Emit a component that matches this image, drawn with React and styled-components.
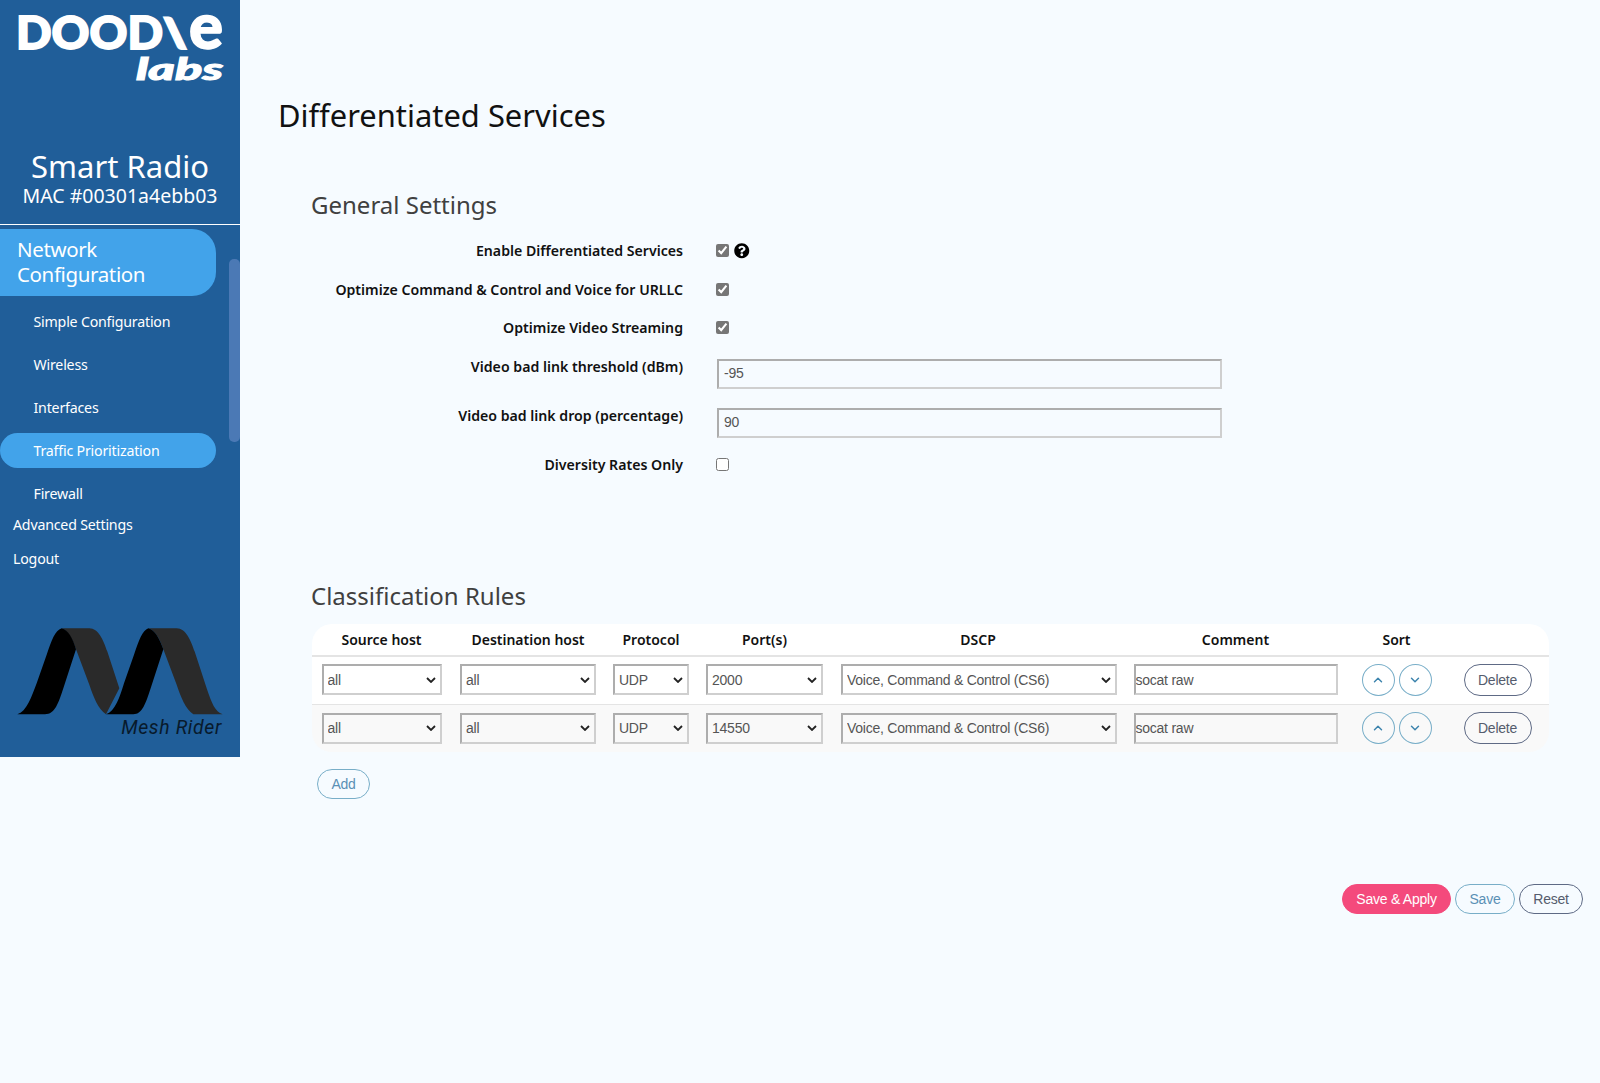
import React from 'react';
import styled, { createGlobalStyle } from 'styled-components';
import { FaQuestionCircle } from 'react-icons/fa';
import { LuChevronUp, LuChevronDown } from 'react-icons/lu';

const Global = createGlobalStyle`
  html, body { margin: 0; padding: 0; background: #f6fbff; }
  body { font-family: "Noto Sans", "Open Sans", sans-serif; }
  * { box-sizing: border-box; }
`;
const chevron = `url("data:image/svg+xml,%3Csvg xmlns='http://www.w3.org/2000/svg' width='10' height='6' viewBox='0 0 10 6'%3E%3Cpath d='M1 1l4 4 4-4' fill='none' stroke='%23222' stroke-width='1.8'/%3E%3C/svg%3E")`;
const Page = styled.div`display: flex; align-items: flex-start; min-height: 1083px; width: 1600px; overflow: hidden;`;
const Sidebar = styled.aside`
  position: relative; width: 240px; height: 757px; flex: none; background: #205e99; color: #fff; overflow: hidden;
`;
const Brand = styled.div`height: 149px; padding: 10px 0 0 14px;`;
const LogoSvg = styled.svg`display: block; overflow: visible;`;
const DeviceName = styled.div`text-align: center; font-size: 31px; line-height: 34px; height: 34px;`;
const DeviceMac = styled.div`text-align: center; font-size: 19.5px; line-height: 26px; height: 26px;`;
const Divider = styled.div`height: 1px; background: #fff; margin: 15px 0 4px;`;
const GroupPill = styled.div`
  width: 216px; height: 67px; background: #42a3ea; border-radius: 0 24px 24px 0;
  padding: 8px 0 0 17px; font-size: 20.5px; letter-spacing: -0.37px; line-height: 25px;
`;
const SubList = styled.div`display: flex; flex-direction: column; padding-top: 5px;`;
const SubItem = styled.div`
  height: 35px; margin-top: ${p => (p.$first ? 3 : 8)}px; width: 216px; padding-left: 33.5px; font-size: 14.2px; letter-spacing: -0.2px; line-height: 35px;
  border-radius: 18px; background: ${p => (p.$active ? '#42a3ea' : 'transparent')};
`;
const TopItem = styled.div`padding-left: 13px; font-size: 14.2px; letter-spacing: -0.2px; line-height: 20px; height: 20px; margin-top: ${p => p.$gap}px;`;
const MeshLogo = styled.div`margin-top: 59px; position: relative; height: 130px;`;
const MeshText = styled.span`
  position: absolute; right: 18px; top: 88px; font-family: Roboto, sans-serif; font-style: italic; font-size: 19.4px;
  letter-spacing: 0.65px; color: #081a2c;
`;
const ScrollThumb = styled.div`position: absolute; top: 259px; right: 0; width: 11px; height: 183px; background: #4b79b5; border-radius: 5px;`;
const Main = styled.main`flex: 1; padding: 93px 17px 0 38px;`;
const Title = styled.h1`margin: 0; font-weight: 400; font-size: 30.9px; line-height: 44px; color: #111;`;
const Section = styled.section`padding-left: 33px;`;
const SectionTitle = styled.h2`margin: 0; font-weight: 400; font-size: 24px; line-height: 34px; color: #404040; margin-top: ${p => p.$top}px;`;
const Form = styled.div`margin-top: 10px;`;
const Row = styled.div`display: grid; grid-template-columns: 372px 1fr; column-gap: 33px; height: ${p => p.$h}px; align-items: ${p => (p.$top ? 'start' : 'center')}; padding-top: ${p => (p.$top ? 9 : 0)}px;`;
const Label = styled.label`text-align: right; font-weight: 600; font-size: 14.15px; line-height: 20px; color: #111;`;
const CheckWrap = styled.div`display: flex; align-items: center; gap: 5px; margin-bottom: 1px;`;
const Check = styled.input.attrs({ type: 'checkbox' })`width: 13px; height: 13px; margin: 0; accent-color: #767676;`;
const Help = styled(FaQuestionCircle)`width: 15.5px; height: 15.5px; color: #000;`;
const insetBorder = `
  border-style: solid; border-width: 2px;
  border-color: #adadad #cfcfcf #cfcfcf #adadad;
`;
const controlFont = `
  font-family: "Liberation Sans", Arial, sans-serif; font-size: 14px; letter-spacing: -0.24px; color: #555;
`;
const TextBox = styled.input`
  ${insetBorder}
  ${controlFont}
  display: block; width: 505px; height: 30px; padding: 0 5px 1px; background: #f6fbff; outline: none;
  margin: 2px 0 0 1px;
`;
const Table = styled.table`
  width: 1237px; table-layout: fixed; border-collapse: separate; border-spacing: 0; margin: 11px 0 0 1px;
`;
const HeadCell = styled.th`
  background: #fff; height: 33px; font-weight: 600; font-size: 14px; color: #111; text-align: center; padding: 0; border-bottom: 2px solid #e4e4e4;
  &:first-child { border-top-left-radius: 20px; }
  &:last-child { border-top-right-radius: 20px; }
`;
const Cell = styled.td`
  padding: 0 0 ${p => (p.$alt ? 1 : 2)}px; text-align: center; height: ${p => (p.$alt ? 47 : 48)}px; background: ${p => (p.$alt ? '#f9f9f9' : '#fff')};
  border-bottom: ${p => (p.$alt ? 'none' : '1px solid #e4e4e4')};
  vertical-align: middle;
  &:first-child { border-bottom-left-radius: ${p => (p.$alt ? 20 : 0)}px; }
  &:last-child { border-bottom-right-radius: ${p => (p.$alt ? 20 : 0)}px; }
`;
const Select = styled.select`
  ${insetBorder}
  ${controlFont}
  appearance: none;
  width: ${p => p.$w}px; height: 31px; padding: 0 16px 0 4px; margin-left: ${p => p.$ml || 0}px;
  background: ${p => (p.$alt ? '#f9f9f9' : '#fff')} ${chevron} no-repeat right 4px center; vertical-align: middle;
  border-radius: 0; outline: none;
`;
const CellInput = styled.input`
  ${insetBorder}
  ${controlFont}
  width: 204px; height: 31px; padding: 0; background: ${p => (p.$alt ? '#f9f9f9' : '#fff')}; vertical-align: middle; outline: none;
`;
const SortGroup = styled.div`display: flex; justify-content: center; gap: 4px;`;
const Round = styled.button`
  width: 33px; height: 32px; border-radius: 50%; border: 1px solid #78aec8; background: transparent; color: #3d84ad; padding: 0; display: flex; align-items: center; justify-content: center;
`;
const Pill = styled.button`
  height: ${p => p.$h || 30}px; padding: 0; width: ${p => p.$w}px; border-radius: 16px; font-family: "Liberation Sans", Arial, sans-serif; font-size: 14px; letter-spacing: -0.24px;
  border: 1px solid ${p => ({ primary: '#f44a7c', neutral: '#5e6a85', link: '#78aec8' }[p.$kind])};
  background: ${p => (p.$kind === 'primary' ? '#f44a7c' : 'transparent')};
  color: ${p => ({ primary: '#fff', neutral: '#555c6d', link: '#5a90b5' }[p.$kind])};
`;
const AddWrap = styled.div`margin: 17px 0 0 6px;`;
const Actions = styled.div`display: flex; justify-content: flex-end; gap: 4px; margin-top: 85px;`;

const rules = [{ port: '2000' }, { port: '14550', alt: true }];
const LOGO_FONT = { fontFamily: 'Lato, sans-serif', fontWeight: 900, fill: '#fff', stroke: '#fff' };

export default function App() {
  return (
    <Page>
      <Global />
      <Sidebar>
        <Brand>
          <LogoSvg width="212" height="76" viewBox="0 0 212 76">
            <text {...LOGO_FONT} x="2" y="39" textLength="147" lengthAdjust="spacingAndGlyphs" fontSize="46" strokeWidth="1.8">DOOD</text>
            <text {...LOGO_FONT} x="150" y="36" textLength="22" lengthAdjust="spacingAndGlyphs" fontSize="38" strokeWidth="3">\</text>
            <text {...LOGO_FONT} x="175" y="39" textLength="34" lengthAdjust="spacingAndGlyphs" fontSize="64" strokeWidth="1.5">e</text>
            <text {...LOGO_FONT} x="122" y="70" textLength="87" lengthAdjust="spacingAndGlyphs" fontStyle="italic" fontSize="31" strokeWidth="1">labs</text>
          </LogoSvg>
        </Brand>
        <DeviceName>Smart Radio</DeviceName>
        <DeviceMac>MAC #00301a4ebb03</DeviceMac>
        <Divider />
        <GroupPill>Network<br />Configuration</GroupPill>
        <SubList>
          <SubItem $first>Simple Configuration</SubItem>
          <SubItem>Wireless</SubItem>
          <SubItem>Interfaces</SubItem>
          <SubItem $active>Traffic Prioritization</SubItem>
          <SubItem>Firewall</SubItem>
        </SubList>
        <TopItem $gap={4}>Advanced Settings</TopItem>
        <TopItem $gap={14}>Logout</TopItem>
        <MeshLogo>
          <svg width="240" height="87" viewBox="0 85 720 260" style={{ display: 'block' }}>
            <path fill="#2a2a2a" d="M185 85H268C295 85 310 120 322 155L358 265L318 343C295 330 280 290 268 255L228 148C215 110 200 90 185 85Z" />
            <path fill="#000" d="M52 343C80 335 95 290 110 250L140 165C155 120 165 92 185 85C205 90 218 115 228 148L190 265C175 310 165 343 135 343Z" />
            <path fill="#2a2a2a" d="M445 85H530C557 85 572 120 584 155L620 265C635 310 645 335 668 343H580C557 330 542 290 530 255L490 148C477 110 462 90 445 85Z" />
            <path fill="#000" d="M318 343C345 335 360 290 372 250L402 165C417 120 427 92 445 85C465 90 478 115 490 148L452 265C437 310 427 343 400 343Z" />
          </svg>
          <MeshText>Mesh Rider</MeshText>
        </MeshLogo>
        <ScrollThumb />
      </Sidebar>
      <Main>
        <Title>Differentiated Services</Title>
        <Section>
          <SectionTitle $top={51}>General Settings</SectionTitle>
          <Form>
            <Row $h={38.5}><Label>Enable Differentiated Services</Label><CheckWrap><Check defaultChecked /><Help /></CheckWrap></Row>
            <Row $h={38.5}><Label>Optimize Command &amp; Control and Voice for URLLC</Label><CheckWrap><Check defaultChecked /></CheckWrap></Row>
            <Row $h={38.5}><Label>Optimize Video Streaming</Label><CheckWrap><Check defaultChecked /></CheckWrap></Row>
            <Row $h={49} $top><Label>Video bad link threshold (dBm)</Label><TextBox defaultValue="-95" /></Row>
            <Row $h={49} $top><Label>Video bad link drop (percentage)</Label><TextBox defaultValue="90" /></Row>
            <Row $h={38.5}><Label>Diversity Rates Only</Label><CheckWrap><Check /></CheckWrap></Row>
          </Form>
          <SectionTitle $top={95}>Classification Rules</SectionTitle>
          <Table>
            <colgroup>
              {[139, 154, 92, 135, 292, 223, 99, 103].map((w, i) => <col key={i} width={w} />)}
            </colgroup>
            <thead>
              <tr>
                {['Source host', 'Destination host', 'Protocol', 'Port(s)', 'DSCP', 'Comment', 'Sort', ''].map((h, i) => <HeadCell key={i}>{h}</HeadCell>)}
              </tr>
            </thead>
            <tbody>
              {rules.map(r => (
                <tr key={r.port}>
                  <Cell $alt={r.alt}><Select $alt={r.alt} $w={120}><option>all</option></Select></Cell>
                  <Cell $alt={r.alt}><Select $alt={r.alt} $w={136}><option>all</option></Select></Cell>
                  <Cell $alt={r.alt}><Select $alt={r.alt} $w={76}><option>UDP</option></Select></Cell>
                  <Cell $alt={r.alt}><Select $alt={r.alt} $w={117}><option>{r.port}</option></Select></Cell>
                  <Cell $alt={r.alt}><Select $alt={r.alt} $w={276} $ml={2}><option>Voice, Command &amp; Control (CS6)</option></Select></Cell>
                  <Cell $alt={r.alt}><CellInput $alt={r.alt} defaultValue="socat raw" /></Cell>
                  <Cell $alt={r.alt}>
                    <SortGroup>
                      <Round><LuChevronUp size={14} strokeWidth={2.5} /></Round>
                      <Round><LuChevronDown size={14} strokeWidth={2.5} /></Round>
                    </SortGroup>
                  </Cell>
                  <Cell $alt={r.alt}><Pill $kind="neutral" $w={68} $h={32}>Delete</Pill></Cell>
                </tr>
              ))}
            </tbody>
          </Table>
          <AddWrap><Pill $kind="link" $w={53}>Add</Pill></AddWrap>
        </Section>
        <Actions>
          <Pill $kind="primary" $w={109}>Save &amp; Apply</Pill>
          <Pill $kind="link" $w={60}>Save</Pill>
          <Pill $kind="neutral" $w={64}>Reset</Pill>
        </Actions>
      </Main>
    </Page>
  );
}
